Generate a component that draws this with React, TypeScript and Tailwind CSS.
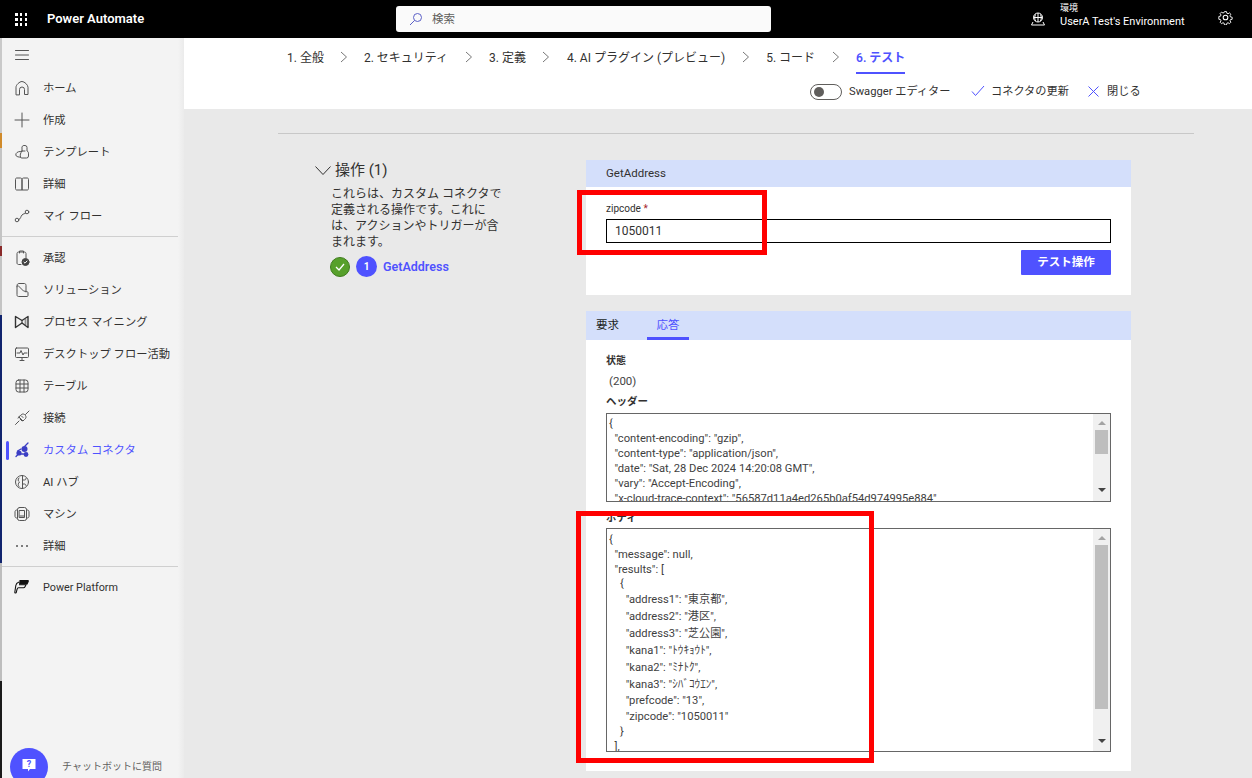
import React from 'react';

const sw = { fill: 'none', stroke: 'currentColor', strokeWidth: 1, strokeLinecap: 'round' as const, strokeLinejoin: 'round' as const };
function I({ children, size = 16, className = '' }: { children: React.ReactNode; size?: number; className?: string }) {
  return <svg width={size} height={size} viewBox="0 0 16 16" className={className} {...sw}>{children}</svg>;
}

const icons: Record<string, React.ReactNode> = {
  menu: <I><path d="M1.500 3.500h13M1.500 8h13M1.500 12.500h13" /></I>,
  home: <I><path d="M2 14.500V7.200C2 5 5.500 1.500 8 1.500S14 5 14 7.200v7.300h-3.500V9.500a2.500 2.500 0 0 0-5 0v5z" /></I>,
  plus: <I><path d="M8 1v14M1 8h14" /></I>,
  template: <I><path d="M8 7V4a2 2 0 0 1 2-2.500h1a2 2 0 0 1 2 2V7c1.500.5 1.500 2 1.500 3v2a2 2 0 0 1-2 2H8a2 2 0 0 1-1.500-.7C5.500 13 2 13 1.800 11c-.2-2 2-3.500 4-3.500zM8 7h3M6.500 13.300c-.8-2 0-4.500 1.500-6.300" /></I>,
  book: <I><path d="M1.500 3.200C1.500 2.500 2 2 2.700 2H6.500C7.400 2 8 2.800 8 3.500V14H2.700c-.7 0-1.200-.5-1.200-1.200zM14.500 3.200c0-.7-.5-1.200-1.200-1.200H9.500C8.600 2 8 2.800 8 3.500V14h5.300c.7 0 1.200-.5 1.200-1.200z" /></I>,
  flow: <I><circle cx="3" cy="12" r="1.800" /><circle cx="13" cy="4" r="1.800" /><path d="M4.800 11.500C7 11 6.500 8.500 8 7s2.500-1 3.500-1.800" /></I>,
  approve: <I><path d="M7 14.500H4.500c-.8 0-1.500-.7-1.500-1.500V3.500C3 2.700 3.700 2 4.500 2h6c.8 0 1.500.7 1.500 1.500V8M5.500 3V1h4v2" /><circle cx="11.500" cy="12" r="3.500" fill="#444" stroke="#444" /><path d="m10 12.200 1 1 2-2.200" stroke="#fff" /></I>,
  solution: <I><path d="M3 5V3.500C3 2.500 3.800 1.500 5 1.500h5.500c1 0 1.500 1 1.500 2V10M3 5c0-1 .5-1.500 1-1.500L9.500 9l3 .5c1 0 1.500.5 1.500 1.500v2.500c0 .6-.4 1-1 1H4.500C3.500 14.500 3 14 3 13z" /></I>,
  mining: <I><path d="M1.500 2.500 8 6.500l6-4v11l-6-4.500-6.500 4.500z" stroke="#333" strokeWidth="1.400" /><path d="M8 6.500v3M11 6h1M11 8h1M11 10h1" stroke="#333" /></I>,
  desktop: <I><rect x="1.500" y="2" width="13" height="9.500" rx="1" /><path d="M3 7h3l1-2.500L9 9l1-2h3M6 14.500h4M8 11.500v3" /></I>,
  table: <I><rect x="2" y="2" width="12" height="12" rx="2.500" /><path d="M6 2v12M10 2v12M2 6h12M2 10h12" /></I>,
  plug: <I><path d="M1.500 14.500 5 11M15 1l-3.500 3.500M5 7l4 4 1.500-1.500c1.500-1 2-2.500 1-4l-1-1c-1.500-1-3-.5-4 1zM4 8l1.500-1M7.500 6l1.500 1.500M6 9l2 2" /></I>,
  custom: <I><g fill="#3b3ec4" stroke="none"><circle cx="10.500" cy="7" r="3" /><circle cx="5" cy="11" r="2.600" /><circle cx="12" cy="12.500" r="2.400" /></g><path d="M2 14.500l2-2M11 4l3-3M3.500 9 7 7M7.500 12h2" stroke="#3b3ec4" strokeWidth="1.300" /></I>,
  ai: <I><circle cx="8" cy="8" r="6.500" /><path d="M8.500 1.500v13M5 4C3.500 5.500 4 7 5.500 8 4 9.500 3.800 11 5 12.500M8.500 6h2c1 0 1.500-.5 1.500-1.500M8.500 10h2c1 0 1.500 1 1.500 1.500" /></I>,
  machine: <I><rect x="3.500" y="1.500" width="9" height="13" rx="2" /><path d="M3.500 4h-1c-1 0-1.500 1-1.500 2v4c0 1 .5 2 1.500 2h1M12.500 4h1c1 0 1.500 1 1.500 2v4c0 1-.5 2-1.500 2h-1M5.500 4.500h5v7h-5zM6 10h4" /></I>,
  more: <svg width="16" height="16" viewBox="0 0 16 16" fill="currentColor"><circle cx="3" cy="8" r="1" /><circle cx="8" cy="8" r="1" /><circle cx="13" cy="8" r="1" /></svg>,
  platform: <svg width="16" height="16" viewBox="0 0 16 16"><path d="M5.500 1h8.500c.8 0 1.200.8.800 1.500L13.500 5.500H5z" fill="#111" /><path d="M5 5.800h7L11 7.800c-.3.600-.8.900-1.500.9H4.500C3.800 8.700 3.300 9.500 3 10.500L2.300 13.500c-.2.800-1.600.600-1.500-.3l1-6.700C2 5 3.500 3.500 5 3" fill="none" stroke="#111" strokeWidth="1.100" /></svg>,
};

const items1 = [
  ['home', 'ホーム'], ['plus', '作成'], ['template', 'テンプレート'], ['book', '詳細'], ['flow', 'マイ フロー'],
];
const items2 = [
  ['approve', '承認'], ['solution', 'ソリューション'], ['mining', 'プロセス マイニング'], ['desktop', 'デスクトップ フロー活動'],
  ['table', 'テーブル'], ['plug', '接続'], ['custom', 'カスタム コネクタ'], ['ai', 'AI ハブ'], ['machine', 'マシン'], ['more', '詳細'],
];

function NavItem({ icon, label }: { icon: string; label: string }) {
  const active = label === 'カスタム コネクタ';
  const small = label === 'Power Platform';
  return (
    <div className={`h-8 shrink-0 flex items-center relative ${small ? 'text-[10.800px]' : 'text-[11.300px]'} ${active ? 'text-[#4f52ff]' : 'text-[#323130]'}`}>
      {active && <span className="absolute left-[4px] top-[7px] w-[3px] h-[19px] bg-[#4f52ff] rounded-sm" />}
      <span className="ml-[12px] w-[16px] h-[16px] text-[#555] flex items-center justify-center">{icons[icon]}</span>
      <span className="ml-[13px] pt-[2px] whitespace-nowrap">{label}</span>
    </div>
  );
}

function Scrollbar({ thumb, gap }: { thumb: string; gap: string }) {
  return (
    <div className="w-[17px] shrink-0 h-full bg-[#f0f0f0] flex flex-col items-center">
      <span className="mt-[7px] w-0 h-0 border-x-[4px] border-x-transparent border-b-[4px] border-b-[#a3a3a3]" />
      <span className={`mt-[5px] w-[13px] bg-[#bebebe] ${thumb}`} />
      <span className={`w-0 h-0 border-x-[4px] border-x-transparent border-t-[4px] border-t-[#444] ${gap}`} />
    </div>
  );
}

const headerLines: [string, number][] = [
  ['{', 15], ['  "content-encoding": "gzip",', 15], ['  "content-type": "application/json",', 15],
  ['  "date": "Sat, 28 Dec 2024 14:20:08 GMT",', 15], ['  "vary": "Accept-Encoding",', 15],
  ['  "x-cloud-trace-context": "56587d11a4ed265b0af54d974995e884"', 15],
];
const bodyLines: [string, number][] = [
  ['{', 15], ['  "message": null,', 15], ['  "results": [', 15], ['    {', 14],
  ['      "address1": "東京都",', 17], ['      "address2": "港区",', 17], ['      "address3": "芝公園",', 17],
  ['      "kana1": "ﾄｳｷｮｳﾄ",', 17], ['      "kana2": "ﾐﾅﾄｸ",', 17], ['      "kana3": "ｼﾊﾞｺｳｴﾝ",', 17],
  ['      "prefcode": "13",', 16], ['      "zipcode": "1050011"', 15], ['    }', 15], ['  ],', 15],
];

function CodeLines({ lines, pad }: { lines: [string, number][]; pad: string }) {
  return (
    <div className={`flex-1 min-w-0 pl-[2px] overflow-hidden text-[11.200px] text-[#3f3f3f] ${pad}`}>
      {lines.map(([t, h], i) => (
        <div key={i} style={{ height: h, lineHeight: `${h}px` }} className="whitespace-pre">{t}</div>
      ))}
    </div>
  );
}

const steps = ['1. 全般', '2. セキュリティ', '3. 定義', '4. AI プラグイン (プレビュー)', '5. コード'];

export default function App() {
  return (
    <div className="w-[1252px] h-[778px] overflow-hidden relative flex flex-col bg-[#e9e9e9] [font-family:'Roboto','Noto_Sans_CJK_JP',sans-serif]">
      {/* top bar */}
      <div className="h-[38px] shrink-0 bg-black text-white flex items-center">
        <div className="ml-[15px] w-[12px] h-[12px] grid grid-cols-3 gap-[2.500px]">
          {Array.from({ length: 9 }).map((_, i) => <span key={i} className="w-[2.500px] h-[2.500px] bg-white" />)}
        </div>
        <span className="ml-[20px] w-[349px] text-[13px] font-semibold whitespace-nowrap">Power Automate</span>
        <div className="w-[375px] h-[26px] bg-[#fafafa] rounded-[3px] flex items-center pl-[13px] text-[11.500px] text-[#605e5c]">
          <svg width="14" height="14" viewBox="0 0 14 14" fill="none" stroke="#5b5fc7" strokeWidth="1"><circle cx="8.500" cy="5.500" r="4" /><path d="M5.500 8.500 1 13" /></svg>
          <span className="ml-[9px] pt-[1px]">検索</span>
        </div>
        <svg className="ml-[259px]" width="16" height="16" viewBox="0 0 16 16" fill="none" stroke="#fff" strokeWidth="1"><circle cx="8" cy="6.500" r="4.500" /><path d="M3.500 6.500h9M8 2v9M5.500 3.500c-1 2-1 4.500 0 6.500M10.500 3.500c1 2 1 4.500 0 6.500M3 11 1.500 14h13L13 11" /></svg>
        <div className="ml-[14px] w-[158px] flex flex-col mt-[-5px]">
          <span className="text-[9px] leading-[11px] whitespace-nowrap">環境</span>
          <span className="text-[11px] leading-[16px] whitespace-nowrap">UserA Test's Environment</span>
        </div>
        <svg width="15" height="15" viewBox="0 0 16 16" fill="none" stroke="#fff" strokeWidth="1.100" className="mt-[-3px]"><circle cx="8" cy="8" r="2.500" /><path d="M6.800 1h2.400l.4 2 1.400.6 1.700-1.100 1.700 1.700-1.100 1.700.6 1.400 2 .4v2.400l-2 .4-.6 1.400 1.100 1.700-1.700 1.700-1.700-1.100-1.400.6-.4 2H6.800l-.4-2-1.400-.6-1.700 1.100-1.700-1.700 1.100-1.700-.6-1.400-2-.4V6.800l2-.4.6-1.400-1.100-1.700 1.700-1.700L5 2.700l1.400-.6z" transform="translate(.8 .8) scale(.9)" /></svg>
      </div>

      <div className="flex-1 min-h-0 flex">
        {/* desktop edge showing behind the window */}
        <div className="w-[2px] shrink-0 flex flex-col">
          <div className="h-[95px] bg-[#c9c9c9]" />
          <div className="h-[15px] bg-[#d08a2a]" />
          <div className="h-[98px] bg-[#c4c4c4]" />
          <div className="h-[10px] bg-[#8a2a2a]" />
          <div className="h-[59px] bg-[#c4c4c4]" />
          <div className="h-[248px] bg-[#10246e]" />
          <div className="h-[118px] bg-[#bdbdbd]" />
          <div className="flex-1 bg-[#1a1a1a]" />
        </div>

        {/* sidebar */}
        <aside className="w-[182px] shrink-0 bg-[#f3f3f3] relative flex flex-col">
          <div className="absolute right-0 top-0 bottom-0 w-[6px] bg-gradient-to-r from-[#f3f3f3] to-[#ebebeb]" />
          <div className="h-[34px] flex items-center pl-[12px] text-[#555]">{icons.menu}</div>
          {items1.map(([ic, l]) => <NavItem key={l} icon={ic} label={l} />)}
          <div className="mt-[4px] mb-[5px] h-px bg-[#cfcfcf] shrink-0" />
          {items2.map(([ic, l]) => <NavItem key={ic} icon={ic} label={l} />)}
          <div className="my-[4px] h-px bg-[#cfcfcf] shrink-0" />
          <NavItem icon="platform" label="Power Platform" />
          <div className="mt-auto h-[30px] flex items-start pl-[8px] relative">
            <div className="w-[38px] h-[38px] shrink-0 rounded-full bg-[#4f52ff] flex justify-center pt-[9px]">
              <svg width="16" height="16" viewBox="0 0 16 16"><path d="M1.500 2h13v10H9l-2 2.500V12H1.500z" fill="#fff" /><text x="8" y="10" textAnchor="middle" fontSize="9" fontWeight="700" fill="#4f52ff">?</text></svg>
            </div>
            <span className="ml-[14px] mt-[11px] text-[10px] text-[#605e5c] whitespace-nowrap">チャットボットに質問</span>
          </div>
        </aside>

        {/* main */}
        <main className="flex-1 min-w-0 flex flex-col">
          <div className="h-[71px] shrink-0 bg-white flex flex-col">
            <div className="h-[37px] flex items-start pl-[103px] text-[12px] text-[#323130] whitespace-nowrap">
              {steps.map((s, i) => (
                <React.Fragment key={s}>
                  <span className="mt-[11px]">{s}</span>
                  <svg className={`mt-[13px] ${i === 0 ? 'mx-[16px]' : 'mx-[16.500px]'}`} width="8" height="12" viewBox="0 0 8 12" fill="none" stroke="#777" strokeWidth="1"><path d="m1 1 5.500 5L1 11" /></svg>
                </React.Fragment>
              ))}
              <span className="pt-[11px] h-[36px] border-b-[2px] border-[#4f52ff] font-semibold text-[#4f52ff]">6. テスト</span>
            </div>
            <div className="flex items-center pl-[626px] mt-[9px] text-[11.200px] text-[#323130] whitespace-nowrap">
              <span className="w-[32px] h-[16px] rounded-full border border-[#605e5c] flex items-center pl-[3px]"><span className="w-[10px] h-[10px] rounded-full bg-[#605e5c]" /></span>
              <span className="ml-[7px] w-[100px]">Swagger エディター</span>
              <svg className="ml-[22px] mt-[-2px]" width="14" height="12" viewBox="0 0 14 12" fill="none" stroke="#4f52ff" strokeWidth="1"><path d="m1 6.500 3.500 4L13 1" /></svg>
              <span className="ml-[6px] w-[78px]">コネクタの更新</span>
              <svg className="ml-[19px] mt-[-2px]" width="11" height="11" viewBox="0 0 11 11" fill="none" stroke="#4f52ff" strokeWidth="1"><path d="m.5.500 10 10M10.500.500l-10 10" /></svg>
              <span className="ml-[8px]">閉じる</span>
            </div>
          </div>

          <div className="flex-1 min-h-0 pl-[94px] pr-[58px] pt-[24px]">
            <div className="h-px bg-[#c8c8c8]" />
            <div className="flex mt-[26px]">
              <section className="w-[308px] shrink-0 pl-[37px]">
                <div className="flex items-center h-[20px]">
                  <svg width="16" height="9" viewBox="0 0 16 9" fill="none" stroke="#323130" strokeWidth="1"><path d="m.5.500 7.500 8 7.500-8" /></svg>
                  <span className="ml-[4px] text-[15px] text-[#323130]">操作 (1)</span>
                </div>
                <p className="ml-[16px] mt-[5px] w-[174px] text-[12px] leading-[16px] text-[#323130] pt-[1px]">これらは、カスタム コネクタで定義される操作です。これには、アクションやトリガーが含まれます。</p>
                <div className="ml-[15px] mt-[6px] flex items-center">
                  <span className="w-[20px] h-[20px] rounded-full bg-[#57a02b] border border-[#3f7d1d] flex items-center justify-center">
                    <svg width="10" height="8" viewBox="0 0 10 8" fill="none" stroke="#fff" strokeWidth="1.300"><path d="m1 4 3 3 5-6" /></svg>
                  </span>
                  <span className="ml-[6px] w-[21px] h-[21px] rounded-full bg-[#4f52ff] text-white text-[10px] font-bold flex items-center justify-center">1</span>
                  <span className="ml-[6px] pt-[1px] text-[12.500px] font-semibold text-[#4f52ff]">GetAddress</span>
                </div>
              </section>

              <section className="w-[545px] shrink-0 text-[#323130]">
                <div className="bg-white h-[135px]">
                  <div className="h-[27px] bg-[#d4dffb] pl-[20px] flex items-center text-[11.500px]">GetAddress</div>
                  <div className="px-[20px] pt-[15px]">
                    <div className="text-[10px] leading-[13px]">zipcode <span className="text-[#a4262c]">*</span></div>
                    <div className="mt-[4px] h-[24px] border border-black pl-[8px] flex items-center text-[12px]">1050011</div>
                    <div className="mt-[7px] flex justify-end">
                      <span className="w-[90px] h-[25px] bg-[#4f52ff] text-white text-[11.500px] font-semibold flex items-center justify-center rounded-[1px]">テスト操作</span>
                    </div>
                  </div>
                </div>

                <div className="mt-[16px] bg-white h-[460px]">
                  <div className="h-[29px] bg-[#d4dffb] flex text-[11.500px]">
                    <span className="ml-[10px] mt-[6px] text-[#201f1e]">要求</span>
                    <span className="ml-[28px] w-[42px] h-[29px] pt-[6px] text-center border-b-[3px] border-[#4f52ff] text-[#4f52ff]">応答</span>
                  </div>
                  <div className="px-[20px]">
                    <div className="pt-[14px] text-[10px] leading-[14px] font-semibold">状態</div>
                    <div className="mt-[5px] pl-[3px] text-[11.500px] leading-[16px] text-[#444]">(200)</div>
                    <div className="mt-[6px] text-[10.500px] leading-[14px] font-semibold">ヘッダー</div>
                    <div className="mt-[4px] h-[89px] border border-[#666] flex overflow-hidden">
                      <CodeLines lines={headerLines} pad="pt-[2px]" />
                      <Scrollbar thumb="h-[24px]" gap="mt-[34px]" />
                    </div>
                    <div className="mt-[9px] text-[10.500px] leading-[14px] font-semibold">ボディ</div>
                    <div className="mt-[3px] h-[224px] border border-[#666] flex overflow-hidden">
                      <CodeLines lines={bodyLines} pad="pt-[3px]" />
                      <Scrollbar thumb="h-[164px]" gap="mt-[30px]" />
                    </div>
                  </div>
                </div>
              </section>
            </div>
          </div>
        </main>
      </div>

      {/* red annotation frames */}
      <div className="absolute left-[577px] top-[190px] w-[190px] h-[65px] border-[5px] border-[#ff0000]" />
      <div className="absolute left-[576px] top-[511px] w-[298px] h-[252px] border-[5px] border-[#ff0000]" />
    </div>
  );
}
